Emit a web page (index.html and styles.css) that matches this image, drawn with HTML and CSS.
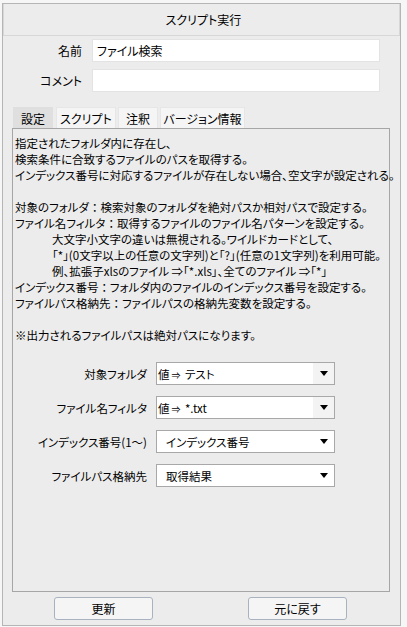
FILE: index.html
```html
<!DOCTYPE html>
<html lang="ja">
<head>
<meta charset="utf-8">
<link rel="stylesheet" href="styles.css">
</head>
<body>
<div class="window">
  <div class="titlebar">スクリプト実行</div>
  <div class="meta">
    <div class="meta-row"><span class="meta-label">名前</span><div class="input">ファイル検索</div></div>
    <div class="meta-row"><span class="meta-label">コメント</span><div class="input"></div></div>
  </div>
  <div class="tabs">
    <div class="tab active">設定</div>
    <div class="tab t2">スクリプト</div>
    <div class="tab t3">注釈</div>
    <div class="tab t4">バージョン情報</div>
  </div>
  <div class="panel">
    <div class="desc">
      <div class="line">指定されたフォルダ内に存在し、</div>
      <div class="line">検索条件に合致するファイルのパスを取得する。</div>
      <div class="line">インデックス番号に対応するファイルが存在しない場合、空文字が設定される。</div>
      <div class="line blank"></div>
      <div class="line">対象のフォルダ<span class="fw">：</span>検索対象のフォルダを絶対パスか相対パスで設定する。</div>
      <div class="line">ファイル名フィルタ<span class="fw">：</span>取得するファイルのファイル名パターンを設定する。</div>
      <div class="line indent">大文字小文字の違いは無視される。ワイルドカードとして、</div>
      <div class="line indent">「*」(0文字以上の任意の文字列)と「?」(任意の1文字列)を利用可能。</div>
      <div class="line indent">例、拡張子xlsのファイル ⇒「*.xls」、全てのファイル ⇒「*」</div>
      <div class="line">インデックス番号<span class="fw">：</span>フォルダ内のファイルのインデックス番号を設定する。</div>
      <div class="line">ファイルパス格納先<span class="fw">：</span>ファイルパスの格納先変数を設定する。</div>
      <div class="line blank"></div>
      <div class="line">※出力されるファイルパスは絶対パスになります。</div>
    </div>
    <div class="fields">
      <div class="field">
        <span class="field-label">対象フォルダ</span>
        <div class="select editable"><span class="prefix">値<span class="arr">⇒</span></span><span class="value">テスト</span><span class="arrow"><svg width="8" height="5" viewBox="0 0 8 5"><path d="M0 0H8L4 5Z" fill="#000"/></svg></span></div>
      </div>
      <div class="field">
        <span class="field-label">ファイル名フィルタ</span>
        <div class="select editable"><span class="prefix">値<span class="arr">⇒</span></span><span class="value">*.txt</span><span class="arrow"><svg width="8" height="5" viewBox="0 0 8 5"><path d="M0 0H8L4 5Z" fill="#000"/></svg></span></div>
      </div>
      <div class="field">
        <span class="field-label">インデックス番号(1〜)</span>
        <div class="select"><span class="value plain">インデックス番号</span><span class="arrow"><svg width="8" height="5" viewBox="0 0 8 5"><path d="M0 0H8L4 5Z" fill="#000"/></svg></span></div>
      </div>
      <div class="field">
        <span class="field-label">ファイルパス格納先</span>
        <div class="select"><span class="value plain">取得結果</span><span class="arrow"><svg width="8" height="5" viewBox="0 0 8 5"><path d="M0 0H8L4 5Z" fill="#000"/></svg></span></div>
      </div>
    </div>
  </div>
  <div class="buttons">
    <button class="btn">更新</button>
    <button class="btn">元に戻す</button>
  </div>
</div>
</body>
</html>
```

FILE: styles.css
```css
* { box-sizing: border-box; }
html, body { margin: 0; padding: 0; }
body {
  background: #f6f6f6;
  font-family: "Noto Sans CJK JP", "Noto Sans", sans-serif;
  font-size: 11.5px;
  font-feature-settings: "palt";
  color: #000;
}
.window {
  margin: 3px 0 0 2px;
  width: 399px;
  height: 623px;
  border: 1px solid #b5b5b5;
  background: #ececec;
  display: flex;
  flex-direction: column;
}
.titlebar {
  height: 32px;
  border: 1px solid #d7d7d7;
  border-top: none;
  display: flex;
  align-items: center;
  justify-content: center;
  font-size: 12px;
  padding-left: 4px;
}
.meta {
  margin-top: 3px;
  display: flex;
  flex-direction: column;
  gap: 7px;
}
.meta-row {
  display: flex;
  align-items: center;
  gap: 10px;
}
.meta-label {
  width: 79px;
  text-align: right;
  font-size: 12px;
}
.input {
  width: 288px;
  height: 23px;
  background: #fff;
  border: 1px solid #e3e3e3;
  padding: 0 4px;
  display: flex;
  align-items: center;
  font-size: 12px;
}
.tabs {
  margin: 15px 0 0 10px;
  height: 21px;
  display: flex;
  gap: 2px;
}
.tab {
  height: 21px;
  background: #f5f5f5;
  border: 1px solid #e6e6e6;
  border-bottom: none;
  display: flex;
  align-items: center;
  justify-content: center;
  font-size: 12px;
}
.tab.active {
  width: 40px;
  background: #dfdfdf;
  border-color: #dfdfdf;
  margin-right: 1px;
}
.tab.t2 { width: 60px; }
.tab.t3 { width: 40px; }
.tab.t4 { width: 85px; }
.panel {
  margin-left: 9px;
  width: 378px;
  height: 464px;
  border: 1px solid #a6a6a6;
  background: #ececec;
  padding: 6px 2px 0 2px;
}
.line {
  height: 16px;
  line-height: 16px;
  white-space: nowrap;
}
.line.indent { padding-left: 37px; }
.fw { font-feature-settings: normal; }
.fields {
  margin-top: 19px;
  display: flex;
  flex-direction: column;
  gap: 11px;
}
.field {
  display: flex;
  align-items: center;
  gap: 9px;
}
.field-label {
  width: 132px;
  text-align: right;
  white-space: nowrap;
}
.select {
  width: 179px;
  height: 23px;
  background: #fff;
  border: 1px solid #a8a8a8;
  display: flex;
  align-items: center;
}
.prefix {
  width: 24px;
  padding-left: 1px;
  white-space: nowrap;
}
.arr { font-size: 9px; margin-left: 2px; }
.value { flex: 1; }
.select.editable .value { padding-left: 4px; }
.value.plain { padding-left: 9px; }
.arrow {
  width: 21px;
  height: 21px;
  display: flex;
  align-items: center;
  justify-content: center;
}
.select.editable .arrow { background: #f3f3f3; }
.buttons {
  margin-top: 5px;
  display: flex;
  padding-left: 51px;
  gap: 95px;
}
.btn {
  width: 99px;
  height: 23px;
  background: #f5f5f5;
  border: 1px solid #a9b3bf;
  border-radius: 3px;
  font-family: inherit;
  font-size: 12px;
  font-feature-settings: "palt";
  color: #000;
  padding: 0;
}
```
